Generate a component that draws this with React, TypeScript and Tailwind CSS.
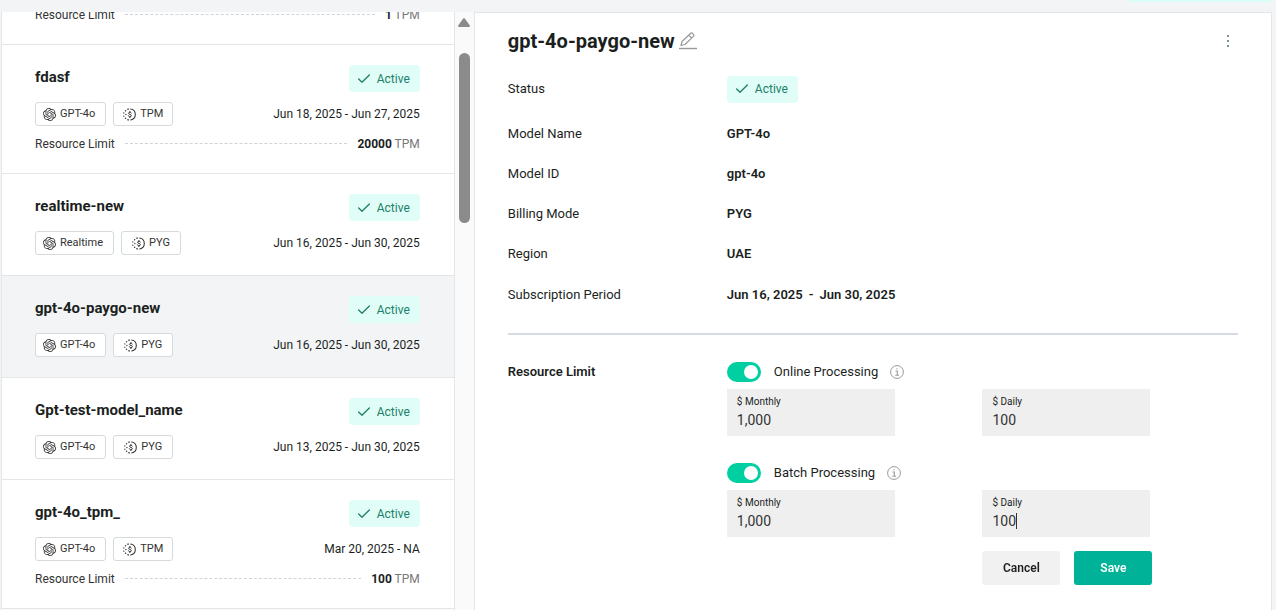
import { useLayoutEffect, useRef, useState } from "react";
import { Check } from "lucide-react";
import { SiOpenai } from "react-icons/si";

type Deployment = {
  name: string;
  model: string;
  billing: "TPM" | "PYG";
  period: string;
  limit?: number;
};

const deployments: Deployment[] = [
  { name: "test-tpm", model: "GPT-4o", billing: "TPM", period: "Jun 18, 2025 - Jun 27, 2025", limit: 1 },
  { name: "fdasf", model: "GPT-4o", billing: "TPM", period: "Jun 18, 2025 - Jun 27, 2025", limit: 20000 },
  { name: "realtime-new", model: "Realtime", billing: "PYG", period: "Jun 16, 2025 - Jun 30, 2025" },
  { name: "gpt-4o-paygo-new", model: "GPT-4o", billing: "PYG", period: "Jun 16, 2025 - Jun 30, 2025" },
  { name: "Gpt-test-model_name", model: "GPT-4o", billing: "PYG", period: "Jun 13, 2025 - Jun 30, 2025" },
  { name: "gpt-4o_tpm_", model: "GPT-4o", billing: "TPM", period: "Mar 20, 2025 - NA", limit: 100 },
];

const details = [
  { label: "Model Name", value: "GPT-4o" },
  { label: "Model ID", value: "gpt-4o" },
  { label: "Billing Mode", value: "PYG" },
  { label: "Region", value: "UAE" },
];

const ActiveBadge = () => (
  <span className="inline-flex h-[27px] items-center gap-[5px] rounded bg-[#e0fdf7] pr-[10px] pl-[7px] text-xs text-[#21806a]">
    <Check className="h-4 w-4" strokeWidth={2} />
    Active
  </span>
);

const BillingIcon = () => (
  <svg className="h-[13px] w-[13px]" viewBox="0 0 16 16" fill="none" stroke="currentColor" strokeLinecap="round" xmlns="http://www.w3.org/2000/svg">
    <path d="M9.5 1.3a6.800 6.800 0 0 1 0 13.400" strokeWidth="1.300" />
    <path d="M6.600 1.300l-.6.2M3.300 3.200l-.2.2M6.600 14.700l-.6-.2M3.300 12.800l-.2-.2M1 6v.1M1 10v.1M3.600 8v.1" strokeWidth="1.600" />
    <path d="M10.200 6.300C10 5.600 9.400 5.300 8.500 5.300c-1 0-1.700.4-1.700 1.200 0 1.800 3.500 1 3.500 2.900 0 .9-.8 1.300-1.800 1.300s-1.700-.4-1.900-1.200M8.500 4.200v1.100M8.500 10.700v1.100" strokeWidth="1.200" />
  </svg>
);

const EditIcon = () => (
  <svg className="h-[18px] w-[18px]" viewBox="0 0 18 18" fill="none" stroke="currentColor" strokeWidth="1.200" strokeLinejoin="round" xmlns="http://www.w3.org/2000/svg">
    <path d="M0 16.500h18" strokeWidth="1.400" />
    <path d="M2 13.500l1-4 8.500-8a1.500 1.500 0 0 1 2.100 0l.8.8a1.500 1.500 0 0 1 0 2.100l-8.400 8.100zM9.800 3.100l2.900 2.900" />
  </svg>
);

const InfoIcon = () => (
  <svg className="h-[14px] w-[14px]" viewBox="0 0 14 14" fill="none" stroke="currentColor" xmlns="http://www.w3.org/2000/svg">
    <circle cx="7" cy="7" r="6.400" />
    <path d="M5.500 6h1.800v4M5.200 10.200h3.800M6.400 3.700h1.200" strokeWidth="1.100" />
  </svg>
);

const DeploymentItem = ({ item, selected, onSelect }: { item: Deployment; selected: boolean; onSelect: () => void }) => (
  <li className={selected ? "border-b border-[#e4e7e9] bg-[#f2f4f5]" : "border-b border-[#e4e7e9] bg-white"}>
    <button type="button" onClick={onSelect} className="block w-full py-5 pr-[34px] pl-[33px] text-left">
      <span className="flex h-[27px] justify-between">
        <span className="text-[15px] leading-6 font-bold">{item.name}</span>
        <ActiveBadge />
      </span>
      <span className="mt-[10px] flex h-6 items-center justify-between">
        <span className="flex gap-[7px] text-[11px] text-[#333]">
          <span className="flex h-6 items-center gap-1 rounded-[3px] border border-[#d5dadd] bg-white pr-[10px] pl-[7px]">
            <SiOpenai className="h-[13px] w-[13px]" />
            {item.model}
          </span>
          <span className="flex h-6 min-w-[60px] items-center justify-center gap-1 rounded-[3px] border border-[#d5dadd] bg-white px-2">
            <BillingIcon />
            {item.billing}
          </span>
        </span>
        <span className="text-xs">{item.period}</span>
      </span>
      {item.limit && (
        <span className="mt-2 flex h-[19px] items-center gap-[10px] text-xs text-[#333]">
          Resource Limit
          <span className="flex-1 border-t border-dashed border-[#d0d4d6]"></span>
          <span className="text-[#777]">
            <b className="font-bold text-[#1c1f1e]">{item.limit}</b> TPM
          </span>
        </span>
      )}
    </button>
  </li>
);

const LimitField = ({ id, label, value, onChange, autoFocus }: { id: string; label: string; value: string; onChange: (value: string) => void; autoFocus?: boolean }) => (
  <div className="flex h-[47px] max-w-[168px] flex-col bg-[#efefef] px-[10px] pt-[5px]">
    <label htmlFor={id} className="text-[10px] leading-4">
      {label}
    </label>
    <div className="flex h-5 items-center">
      <input
        id={id}
        value={value}
        autoFocus={autoFocus}
        onChange={(e) => onChange(e.target.value)}
        className="peer h-5 max-w-full bg-transparent text-sm text-[#333] caret-transparent outline-none [field-sizing:content]"
      />
      <span className="hidden h-4 w-px bg-[#333] peer-focus:block"></span>
    </div>
  </div>
);

const ProcessingLimit = ({ name, title, focusDaily }: { name: string; title: string; focusDaily?: boolean }) => {
  const [enabled, setEnabled] = useState(true);
  const [monthly, setMonthly] = useState("1,000");
  const [daily, setDaily] = useState("100");

  return (
    <div>
      <div className="flex h-5 items-center text-[13px]">
        <input id={name} type="checkbox" role="switch" checked={enabled} onChange={(e) => setEnabled(e.target.checked)} className="sr-only" />
        <label htmlFor={name} className="flex cursor-pointer items-center gap-[13px]">
          <span className={enabled ? "flex h-5 w-[34px] justify-end rounded-full bg-[#00cfa2] p-[3px]" : "flex h-5 w-[34px] rounded-full bg-gray-300 p-[3px]"}>
            <span className="h-[14px] w-[14px] rounded-full bg-white"></span>
          </span>
          {title}
        </label>
        <span className="ml-3 text-[#999]">
          <InfoIcon />
        </span>
      </div>
      <div className="mt-[7px] grid grid-cols-2">
        <LimitField id={`${name}-monthly`} label="$ Monthly" value={monthly} onChange={setMonthly} />
        <LimitField id={`${name}-daily`} label="$ Daily" value={daily} onChange={setDaily} autoFocus={focusDaily} />
      </div>
    </div>
  );
};

const App = () => {
  const [selected, setSelected] = useState("gpt-4o-paygo-new");
  const listRef = useRef<HTMLUListElement>(null);

  useLayoutEffect(() => {
    if (listRef.current) {
      listRef.current.scrollTop = 96;
    }
  }, []);

  return (
    <div className="flex h-screen flex-col overflow-hidden bg-[#f2f4f5] font-['Roboto',sans-serif] text-[#1c1f1e]">
      <div className="flex h-3 shrink-0 justify-end pr-1">
        <span className="h-[2px] w-36 bg-[#dafdf8]"></span>
      </div>
      <div className="flex min-h-0 flex-1 pr-1 pl-px">
        <aside className="flex w-[37.200%] shrink-0 bg-[#fafafa]">
          <ul ref={listRef} className="min-w-0 flex-1 overflow-y-scroll border-x border-[#e4e7e9] pb-px [scrollbar-width:none]">
            {deployments.map((item) => (
              <DeploymentItem key={item.name} item={item} selected={item.name === selected} onSelect={() => setSelected(item.name)} />
            ))}
          </ul>
          <div className="flex w-[19px] flex-col items-center pt-[6px]">
            <svg className="h-[9px] w-3" viewBox="0 0 12 9" fill="#8b8b8b" xmlns="http://www.w3.org/2000/svg">
              <path d="M5.200.6a1 1 0 0 1 1.600 0l5 7a.9.900 0 0 1-.8 1.400H1a.9.900 0 0 1-.8-1.400z" />
            </svg>
            <div className="mt-[26px] h-[170px] w-[11px] rounded-full bg-[#8b8b8b]"></div>
          </div>
        </aside>

        <main className="min-w-0 flex-1 border border-b-0 border-[#e4e7e9] bg-white px-[33px] pt-[14px]">
          <div className="flex h-7 items-center justify-between">
            <div className="flex items-center gap-1">
              <h1 className="text-xl font-bold">gpt-4o-paygo-new</h1>
              <button type="button" aria-label="Edit name" className="text-[#999]">
                <EditIcon />
              </button>
            </div>
            <button type="button" aria-label="More actions" className="flex w-5 flex-col items-center gap-[3px]">
              <span className="h-[2px] w-[2px] bg-[#7d9298]"></span>
              <span className="h-[2px] w-[2px] bg-[#7d9298]"></span>
              <span className="h-[2px] w-[2px] bg-[#7d9298]"></span>
            </button>
          </div>

          <dl className="mt-5 grid grid-cols-[30%_70%] text-[13px]">
            <dt className="flex h-7 items-center">Status</dt>
            <dd className="flex h-7 items-center">
              <ActiveBadge />
            </dd>
            {details.map(({ label, value }) => (
              <div key={label} className="col-span-2 mt-5 grid h-5 grid-cols-subgrid items-center first-of-type:mt-[21px]">
                <dt>{label}</dt>
                <dd className="font-semibold">{value}</dd>
              </div>
            ))}
            <div className="col-span-2 mt-[21px] grid h-5 grid-cols-subgrid items-center">
              <dt>Subscription Period</dt>
              <dd className="flex gap-[6px] font-semibold">
                <span>Jun 16, 2025</span>
                <span>-</span>
                <span>Jun 30, 2025</span>
              </dd>
            </div>
          </dl>

          <hr className="mt-7 border-t-2 border-[#d3dce4]" />

          <form onSubmit={(e) => e.preventDefault()} className="mt-[27px] grid grid-cols-[30%_70%]">
            <h2 className="text-[13px] leading-5 font-semibold">Resource Limit</h2>
            <div className="flex flex-col gap-[27px]">
              <ProcessingLimit name="online" title="Online Processing" />
              <ProcessingLimit name="batch" title="Batch Processing" focusDaily />
            </div>
            <div className="col-start-2 mt-[14px] grid grid-cols-2">
              <div className="col-start-2 flex gap-[14px] text-xs font-semibold">
                <button type="button" className="h-[34px] w-[78px] rounded-[3px] bg-[#f1f1f1]">
                  Cancel
                </button>
                <button type="submit" className="h-[34px] w-[78px] rounded-[3px] bg-[#00b398] text-white">
                  Save
                </button>
              </div>
            </div>
          </form>
        </main>
      </div>
    </div>
  );
};

export default App;
